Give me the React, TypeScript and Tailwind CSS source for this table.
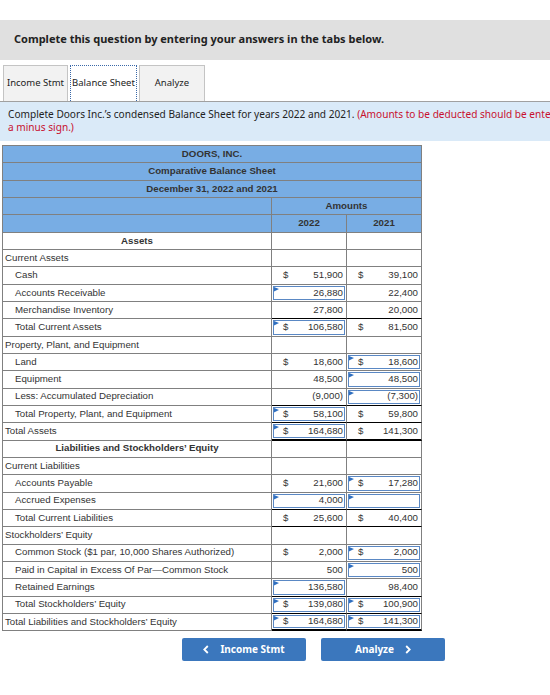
import React from 'react';

type Cell = { d?: boolean; v?: string; inp?: boolean };
type Row = {
  label: string;
  type: 'section' | 'cat' | 'item';
  c1?: Cell;
  c2?: Cell;
  ul?: 'single' | 'double';
};

const rows: Row[] = [
  { label: 'Assets', type: 'section' },
  { label: 'Current Assets', type: 'cat' },
  { label: 'Cash', type: 'item', c1: { d: true, v: '51,900' }, c2: { d: true, v: '39,100' } },
  { label: 'Accounts Receivable', type: 'item', c1: { v: '26,880', inp: true }, c2: { v: '22,400' } },
  { label: 'Merchandise Inventory', type: 'item', c1: { v: '27,800' }, c2: { v: '20,000' }, ul: 'single' },
  { label: 'Total Current Assets', type: 'item', c1: { d: true, v: '106,580', inp: true }, c2: { d: true, v: '81,500' } },
  { label: 'Property, Plant, and Equipment', type: 'cat' },
  { label: 'Land', type: 'item', c1: { d: true, v: '18,600' }, c2: { d: true, v: '18,600', inp: true } },
  { label: 'Equipment', type: 'item', c1: { v: '48,500' }, c2: { v: '48,500', inp: true } },
  { label: 'Less: Accumulated Depreciation', type: 'item', c1: { v: '(9,000)' }, c2: { v: '(7,300)', inp: true }, ul: 'single' },
  { label: 'Total Property, Plant, and Equipment', type: 'item', c1: { d: true, v: '58,100', inp: true }, c2: { d: true, v: '59,800' }, ul: 'single' },
  { label: 'Total Assets', type: 'cat', c1: { d: true, v: '164,680', inp: true }, c2: { d: true, v: '141,300' }, ul: 'double' },
  { label: 'Liabilities and Stockholders\u2019 Equity', type: 'section' },
  { label: 'Current Liabilities', type: 'cat' },
  { label: 'Accounts Payable', type: 'item', c1: { d: true, v: '21,600' }, c2: { d: true, v: '17,280', inp: true } },
  { label: 'Accrued Expenses', type: 'item', c1: { v: '4,000', inp: true }, c2: { v: '', inp: true }, ul: 'single' },
  { label: 'Total Current Liabilities', type: 'item', c1: { d: true, v: '25,600' }, c2: { d: true, v: '40,400' }, ul: 'single' },
  { label: 'Stockholders\u2019 Equity', type: 'cat' },
  { label: 'Common Stock ($1 par, 10,000 Shares Authorized)', type: 'item', c1: { d: true, v: '2,000' }, c2: { d: true, v: '2,000', inp: true } },
  { label: 'Paid in Capital in Excess Of Par\u2014Common Stock', type: 'item', c1: { v: '500' }, c2: { v: '500', inp: true } },
  { label: 'Retained Earnings', type: 'item', c1: { v: '136,580', inp: true }, c2: { v: '98,400' }, ul: 'single' },
  { label: 'Total Stockholders\u2019 Equity', type: 'item', c1: { d: true, v: '139,080', inp: true }, c2: { d: true, v: '100,900', inp: true }, ul: 'single' },
  { label: 'Total Liabilities and Stockholders\u2019 Equity', type: 'cat', c1: { d: true, v: '164,680', inp: true }, c2: { d: true, v: '141,300', inp: true }, ul: 'double' },
];

function Flag() {
  return (
    <svg className="absolute left-0 top-0" width="5" height="5" viewBox="0 0 5 5">
      <polygon points="0,0 5,2 0,4.5" fill="#2f6fc0" />
    </svg>
  );
}

function AmountCell({ c, ul }: { c?: Cell; ul?: 'single' | 'double' }) {
  const bottom =
    ul === 'double'
      ? 'border-b-2 border-b-black'
      : ul === 'single'
      ? 'border-b border-b-black'
      : 'border-b border-b-[#808080]';
  return (
    <div className={`w-[75px] shrink-0 h-full border-r border-r-[#808080] ${bottom} p-px`}>
      <div
        className={`relative flex h-full items-center pl-[9px] pr-[1px] border ${
          c?.inp ? 'border-[#5a88c4]' : 'border-transparent'
        } ${c?.d ? 'justify-between' : 'justify-end'}`}
      >
        {c?.inp && <Flag />}
        {c?.d && <span>$</span>}
        {c?.v && <span>{c.v}</span>}
      </div>
    </div>
  );
}

export default function App() {
  return (
    <div className="w-[550px] h-[695px] overflow-hidden bg-white">
      <div className="w-[640px]">
        <div className="h-[20px]" />
        <div className="h-[40px] bg-[#e0e0e0] flex items-center pl-[14px] pb-px text-[#222] font-bold text-[11px] [font-family:'Noto_Sans',sans-serif]">
          Complete this question by entering your answers in the tabs below.
        </div>
        <div className="h-[5px]" />
        <div className="flex items-end h-[37px] pl-[3px] gap-[2px] border-b border-b-[#a0a0a0] text-[9.5px] text-[#222] [font-family:'Noto_Sans',sans-serif]">
          <div className="w-[65px] h-[36px] flex items-center justify-center bg-[#f2f2f2] border border-[#c4c4c4] border-b-0">
            Income Stmt
          </div>
          <div className="w-[67px] h-[36px] flex items-center justify-center bg-white border border-dotted border-[#3a68a8] border-b-0">
            Balance Sheet
          </div>
          <div className="w-[66px] h-[36px] flex items-center justify-center bg-[#f2f2f2] border border-[#c4c4c4] border-b-0">
            Analyze
          </div>
        </div>
        <div className="h-[39px] bg-[#daeaf8] pl-[8px] pt-[6px] text-[10.1px] leading-[12.5px] text-[#222] whitespace-nowrap [font-family:'Noto_Sans',sans-serif]">
          Complete Doors Inc.&rsquo;s condensed Balance Sheet for years 2022 and 2021.{' '}
          <span className="text-[#c8102e]">(Amounts to be deducted should be entered with</span>
          <br />
          <span className="text-[#c8102e]">a minus sign.)</span>
        </div>
        <div className="h-[4px]" />
        {/* Table */}
        <div className="ml-[2px] w-[420px] border-l border-t border-[#808080] text-[9.7px] text-[#333] [font-family:'Liberation_Sans',Arial,sans-serif]">
          {['DOORS, INC.', 'Comparative Balance Sheet', 'December 31, 2022 and 2021'].map((t) => (
            <div
              key={t}
              className="h-[17.33px] w-[419px] bg-[#78ade4] border-r border-b border-[#808080] flex items-center justify-center font-bold"
            >
              {t}
            </div>
          ))}
          <div className="flex h-[17.33px] bg-[#78ade4]">
            <div className="w-[269px] shrink-0 border-r border-b border-[#808080]" />
            <div className="w-[150px] shrink-0 border-r border-b border-[#808080] flex items-center justify-center font-bold">
              Amounts
            </div>
          </div>
          <div className="flex h-[17.33px] bg-[#78ade4]">
            <div className="w-[269px] shrink-0 border-r border-b border-[#808080]" />
            <div className="w-[75px] shrink-0 border-r border-b border-[#808080] flex items-center justify-center font-bold">
              2022
            </div>
            <div className="w-[75px] shrink-0 border-r border-b border-[#808080] flex items-center justify-center font-bold">
              2021
            </div>
          </div>
          {rows.map((r, i) => (
            <div key={i} className="flex h-[17.33px]">
              <div
                className={`w-[269px] shrink-0 border-r border-b border-[#808080] flex items-center ${
                  r.type === 'section'
                    ? 'justify-center font-bold'
                    : r.type === 'cat'
                    ? 'pl-[2px]'
                    : 'pl-[12px]'
                }`}
              >
                {r.label}
              </div>
              <AmountCell c={r.c1} ul={r.ul} />
              <AmountCell c={r.c2} ul={r.ul} />
            </div>
          ))}
        </div>
        <div className="flex gap-[15px] pl-[182px] mt-[7px] [font-family:'Noto_Sans',sans-serif] text-[10px] font-bold text-white">
          <div className="w-[124px] h-[23px] rounded-[2px] bg-[#3b77bd] flex items-center justify-center gap-[11px]">
            <svg width="6" height="9" viewBox="0 0 6 9">
              <polyline points="4.8,1 1.3,4.5 4.8,8" fill="none" stroke="white" strokeWidth="1.8" />
            </svg>
            <span>Income Stmt</span>
          </div>
          <div className="w-[124px] h-[23px] rounded-[2px] bg-[#3b77bd] flex items-center justify-center gap-[11px]">
            <span>Analyze</span>
            <svg width="6" height="9" viewBox="0 0 6 9">
              <polyline points="1.2,1 4.7,4.5 1.2,8" fill="none" stroke="white" strokeWidth="1.8" />
            </svg>
          </div>
        </div>
      </div>
    </div>
  );
}
